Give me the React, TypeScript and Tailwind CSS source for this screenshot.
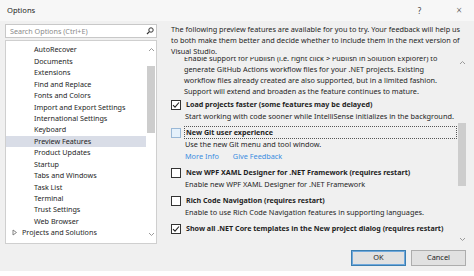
const treeItems = [
  "AutoRecover",
  "Documents",
  "Extensions",
  "Find and Replace",
  "Fonts and Colors",
  "Import and Export Settings",
  "International Settings",
  "Keyboard",
  "Preview Features",
  "Product Updates",
  "Startup",
  "Tabs and Windows",
  "Task List",
  "Terminal",
  "Trust Settings",
  "Web Browser",
];

function Chevron({ up }: { up?: boolean }) {
  return (
    <svg width="7" height="5" viewBox="0 0 7 5" className="block">
      <polyline
        points={up ? "1,4 3.5,1.5 6,4" : "1,1 3.5,3.5 6,1"}
        fill="none"
        stroke="#9a9a9a"
        strokeWidth="1"
      />
    </svg>
  );
}

function Scrollbar({
  arrowHeight,
  thumbTop,
  thumbHeight,
}: {
  arrowHeight: number;
  thumbTop: number;
  thumbHeight: number;
}) {
  return (
    <div className="flex w-[10px] shrink-0 flex-col items-center">
      <div className="flex items-center justify-center" style={{ height: arrowHeight }}>
        <Chevron up />
      </div>
      <div className="relative w-full flex-1">
        <div
          className="absolute left-[1px] right-[1px] bg-[#cdcdcd]"
          style={{ top: thumbTop, height: thumbHeight }}
        />
      </div>
      <div className="flex items-center justify-center" style={{ height: arrowHeight }}>
        <Chevron />
      </div>
    </div>
  );
}

function CheckBox({ checked, hover }: { checked?: boolean; hover?: boolean }) {
  return (
    <div
      className={`flex h-[10px] w-[10px] shrink-0 items-center justify-center border ${
        hover ? "border-[#9ab8d6] bg-[#e5f1fb]" : "border-[#333333] bg-white"
      }`}
    >
      {checked && (
        <svg width="8" height="8" viewBox="0 0 8 8">
          <polyline points="1,4.2 3,6.2 7,1.5" fill="none" stroke="#222" strokeWidth="1.1" />
        </svg>
      )}
    </div>
  );
}

function Feature({
  title,
  desc,
  checked,
  focus,
  children,
}: {
  title: string;
  desc?: string;
  checked?: boolean;
  focus?: boolean;
  children?: React.ReactNode;
}) {
  return (
    <div className="flex flex-col">
      <div className="flex h-[13px] items-center gap-[3px]">
        <CheckBox checked={checked} hover={focus} />
        <div
          className={`flex h-[13px] flex-1 items-center pl-[1px] text-[7.15px] font-bold ${
            focus ? "border border-dotted border-[#555]" : "border border-transparent"
          }`}
        >
          {title}
        </div>
      </div>
      {desc && <div className="ml-[14px] leading-[11px]">{desc}</div>}
      {children}
    </div>
  );
}

export default function App() {
  return (
    <div className="flex h-[276px] w-[474px] flex-col overflow-hidden bg-[#f0f0f0] font-['Noto_Sans',sans-serif] text-[7.3px] text-[#1e1e1e]">
      <div className="flex h-[21px] shrink-0 items-center bg-[#f7f7f7] pl-[7px] text-[7.6px]">
        <span>Options</span>
        <span className="ml-auto mr-[35px] text-[8px] text-[#444]">?</span>
        <span className="mr-[12px] text-[10px] font-light text-[#333]">×</span>
      </div>

      <div className="flex h-[223px] shrink-0 pl-[5px]">
        <div className="flex w-[152px] shrink-0 flex-col pt-[3px] text-[7.2px]">
          <div className="flex h-[14px] items-center border border-[#c8c8c8] bg-white pl-[4px] pr-[2px] text-[#8a8a8a]">
            <span>Search Options (Ctrl+E)</span>
            <svg width="8" height="8" viewBox="0 0 8 8" className="ml-auto">
              <circle cx="5" cy="3" r="2.2" fill="none" stroke="#333" strokeWidth="1" />
              <line x1="3.4" y1="4.6" x2="1" y2="7" stroke="#333" strokeWidth="1.2" />
            </svg>
          </div>
          <div className="mt-[2px] flex h-[204px] border border-[#cfcfcf] bg-white">
            <div className="flex flex-1 flex-col pt-[3px]">
              {treeItems.map((item) => (
                <div
                  key={item}
                  className={`flex h-[11.45px] items-center pl-[28px] ${
                    item === "Preview Features" ? "bg-[#d9dde7]" : ""
                  }`}
                >
                  {item}
                </div>
              ))}
              <div className="flex h-[11.45px] items-center pl-[6px]">
                <svg width="6" height="7" viewBox="0 0 6 7" className="mr-[4px]">
                  <polygon points="1,1 4.5,3.5 1,6" fill="none" stroke="#777" strokeWidth="0.9" />
                </svg>
                Projects and Solutions
              </div>
            </div>
            <Scrollbar arrowHeight={17} thumbTop={8} thumbHeight={67} />
          </div>
        </div>

        <div className="flex flex-1 flex-col pl-[14px] pr-[7px] pt-[3px]">
          <div className="flex flex-col whitespace-nowrap leading-[11px]">
            <span>The following preview features are available for you to try. Your feedback will help us</span>
            <span>to both make them better and decide whether to include them in the next version of</span>
            <span>Visual Studio.</span>
          </div>
          <div className="flex h-[187px] overflow-hidden">
            <div className="flex flex-1 flex-col overflow-hidden whitespace-nowrap">
              <div className="-mt-[4px] ml-[13px] flex flex-col leading-[11px]">
                <span>Enable support for Publish (i.e. right click &gt; Publish in Solution Explorer) to</span>
                <span>generate GitHub Actions workflow files for your .NET projects. Existing</span>
                <span>workflow files already created are also supported, but in a limited fashion.</span>
                <span>Support will extend and broaden as the feature continues to mature.</span>
              </div>
              <div className="mt-[1px] flex flex-col gap-[4px]">
                <Feature
                  checked
                  title="Load projects faster (some features may be delayed)"
                  desc="Start working with code sooner while IntelliSense initializes in the background."
                />
                <Feature focus title="New Git user experience" desc="Use the new Git menu and tool window.">
                  <div className="ml-[14px] mt-[1px] flex gap-[14px] leading-[11px] text-[#3c8de0]">
                    <span>More Info</span>
                    <span>Give Feedback</span>
                  </div>
                </Feature>
                <Feature
                  title="New WPF XAML Designer for .NET Framework (requires restart)"
                  desc="Enable new WPF XAML Designer for .NET Framework"
                />
                <Feature
                  title="Rich Code Navigation (requires restart)"
                  desc="Enable to use Rich Code Navigation features in supporting languages."
                />
                <Feature
                  checked
                  title="Show all .NET Core templates in the New project dialog (requires restart)"
                />
              </div>
            </div>
            <Scrollbar arrowHeight={10} thumbTop={56} thumbHeight={63} />
          </div>
        </div>
      </div>

      <div className="flex h-[27px] shrink-0 items-start justify-end gap-[5px] pr-[8px] pt-[6px]">
        <button className="h-[16px] w-[55px] border border-[#3c7fb1] bg-[#e1e1e1] text-[7.4px] text-[#1e1e1e] shadow-[inset_0_0_0_1px_#6fa8dc]">
          OK
        </button>
        <button className="h-[16px] w-[55px] border border-[#adadad] bg-[#e1e1e1] text-[7.4px] text-[#1e1e1e]">
          Cancel
        </button>
      </div>
      <div className="flex-1 bg-white" />
    </div>
  );
}
